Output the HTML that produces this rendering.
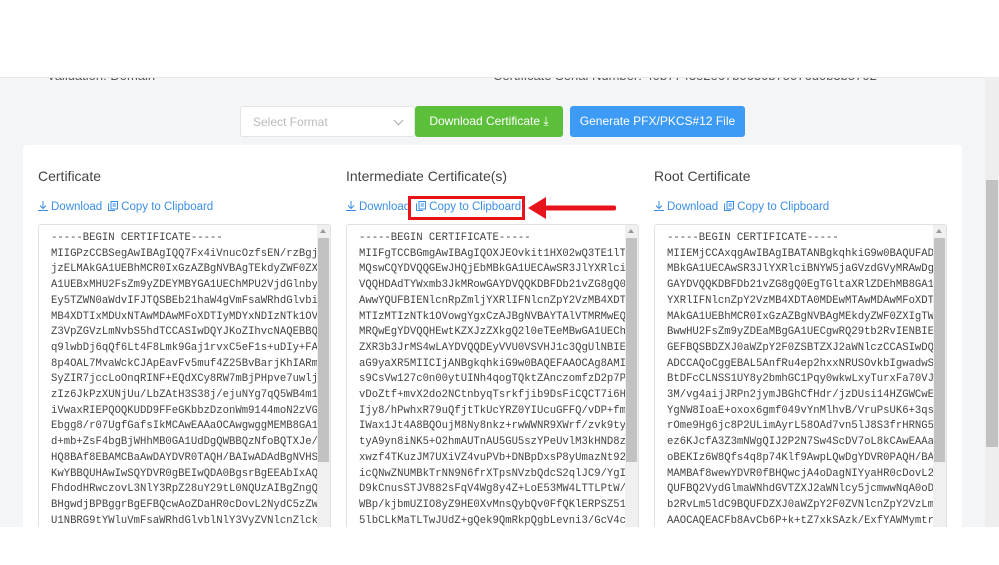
<!DOCTYPE html>
<html><head><meta charset="utf-8"><style>
*{box-sizing:border-box;margin:0;padding:0}
body{width:999px;height:562px;overflow:hidden;background:#fff;font-family:"Liberation Sans",Arial,sans-serif;position:relative}
.gray{position:absolute;left:0;top:77px;width:985px;height:450px;background:#f4f5f7;border-top:1px solid #e6e7ea;overflow:hidden}
.ghost{position:absolute;top:-10px;font-size:13px;color:#555}
.sel{position:absolute;left:240px;top:106px;width:175px;height:31px;background:#fff;border:1px solid #e2e4e8;border-radius:3px;font-size:12px;color:#bbb;padding:8px 12px}
.sel:after{content:"";position:absolute;right:12px;top:10px;width:6px;height:6px;border-right:1px solid #aaa;border-bottom:1px solid #aaa;transform:rotate(45deg)}
.btn{position:absolute;top:106px;height:31px;color:#fff;font-size:12px;text-align:center;line-height:31px;border-radius:3px}
.card{position:absolute;left:23px;top:145px;width:939px;height:420px;background:#fff;border-radius:4px}
.col{position:absolute;top:0}
.h{font-size:14px;color:#444;position:absolute;top:23px;white-space:nowrap}
.links{position:absolute;top:56px;font-size:11.5px;color:#3a8ee6;white-space:nowrap}
.ic{display:inline-block;width:10px;height:10px;vertical-align:-1px;margin-right:3px}
.ic2{margin-left:6px}
.ta{position:absolute;top:79px;width:293px;height:310px;border:1px solid #dfe1e5;border-radius:3px;overflow:hidden;background:#fff}
.ta pre{font-family:"Liberation Mono",monospace;font-size:10.6px;line-height:15.7px;color:#444;padding:6px 0 0 12px;white-space:pre}
.sb{position:absolute;right:0;top:0;width:13px;height:100%;background:#f0f0f0}
.sb i{position:absolute;left:1px;top:13px;width:11px;height:224px;background:#c2c2c2}
.sb:before{content:"";position:absolute;left:3px;top:4px;border:3px solid transparent;border-bottom:4px solid #999;border-top:0}
.psb{position:absolute;left:985px;top:77px;width:14px;height:450px;background:#eee}
.psb i{position:absolute;left:1px;top:103px;width:12px;height:267px;background:#c1c1c1}
</style></head><body>
<div class="gray">
<div class="ghost" style="left:47px">Validation: Domain</div>
<div class="ghost" style="left:493px">Certificate Serial Number: 40b7743e2e67b0630b75076d0b3b5702</div>
</div>
<div class="psb"><i></i></div>
<div class="sel">Select Format</div>
<div class="btn" style="left:415px;width:148px;background:#5cbf3a">Download Certificate ⤓</div>
<div class="btn" style="left:570px;width:175px;background:#3d9bf5">Generate PFX/PKCS#12 File</div>
<div class="card">
<div class="col" style="left:15px">
<div class="h">Certificate</div>
<div class="links"><svg class="ic" viewBox="0 0 10 10"><path d="M5 0V7M2 4.5L5 7.5L8 4.5M0 9.5H10" stroke="#3a8ee6" fill="none"/></svg>Download<svg class="ic ic2" viewBox="0 0 10 10"><path d="M3 .5H9.5V8H3ZM.5 2.5V9.5H7M4.5 3H8M4.5 5H8" stroke="#3a8ee6" fill="none"/></svg>Copy to Clipboard</div>
<div class="ta"><pre>-----BEGIN CERTIFICATE-----
MIIGPzCCBSegAwIBAgIQQ7Fx4iVnucOzfsEN/rzBgjAN
jzELMAkGA1UEBhMCR0IxGzAZBgNVBAgTEkdyZWF0ZXIg
A1UEBxMHU2FsZm9yZDEYMBYGA1UEChMPU2VjdGlnbyBM
Ey5TZWN0aWdvIFJTQSBEb21haW4gVmFsaWRhdGlvbiBT
MB4XDTIxMDUxNTAwMDAwMFoXDTIyMDYxNDIzNTk1OVow
Z3VpZGVzLmNvbS5hdTCCASIwDQYJKoZIhvcNAQEBBQAD
q9lwbDj6qQf6Lt4F8Lmk9Gaj1rvxC5eF1s+uDIy+FACH
8p4OAL7MvaWckCJApEavFv5muf4Z25BvBarjKhIARmeO
SyZIR7jccLoOnqRINF+EQdXCy8RW7mBjPHpve7uwljac
zIz6JkPzXUNjUu/LbZAtH3S38j/ejuNYg7qQ5WB4m1VW
iVwaxRIEPQOQKUDD9FFeGKbbzDzonWm9144moN2zVG2v
Ebgg8/r07UgfGafsIkMCAwEAAaOCAwgwggMEMB8GA1Ud
d+mb+ZsF4bgBjWHhMB0GA1UdDgQWBBQzNfoBQTXJe/1x
HQ8BAf8EBAMCBaAwDAYDVR0TAQH/BAIwADAdBgNVHSUE
KwYBBQUHAwIwSQYDVR0gBEIwQDA0BgsrBgEEAbIxAQIC
FhdodHRwczovL3NlY3RpZ28uY29tL0NQUzAIBgZngQwB
BHgwdjBPBggrBgEFBQcwAoZDaHR0cDovL2NydC5zZWN0
U1NBRG9tYWluVmFsaWRhdGlvblNlY3VyZVNlcnZlckNB</pre><div class="sb"><i></i></div></div>
</div>
<div class="col" style="left:323px">
<div class="h">Intermediate Certificate(s)</div>
<div class="links"><svg class="ic" viewBox="0 0 10 10"><path d="M5 0V7M2 4.5L5 7.5L8 4.5M0 9.5H10" stroke="#3a8ee6" fill="none"/></svg>Download<svg class="ic ic2" viewBox="0 0 10 10"><path d="M3 .5H9.5V8H3ZM.5 2.5V9.5H7M4.5 3H8M4.5 5H8" stroke="#3a8ee6" fill="none"/></svg>Copy to Clipboard</div>
<div class="ta"><pre>-----BEGIN CERTIFICATE-----
MIIFgTCCBGmgAwIBAgIQOXJEOvkit1HX02wQ3TE1lTAN
MQswCQYDVQQGEwJHQjEbMBkGA1UECAwSR3JlYXRlciBN
VQQHDAdTYWxmb3JkMRowGAYDVQQKDBFDb21vZG8gQ0Eg
AwwYQUFBIENlcnRpZmljYXRlIFNlcnZpY2VzMB4XDTE5
MTIzMTIzNTk1OVowgYgxCzAJBgNVBAYTAlVTMRMwEQYD
MRQwEgYDVQQHEwtKZXJzZXkgQ2l0eTEeMBwGA1UEChMV
ZXR3b3JrMS4wLAYDVQQDEyVVU0VSVHJ1c3QgUlNBIENl
aG9yaXR5MIICIjANBgkqhkiG9w0BAQEFAAOCAg8AMIIC
s9CsVw127c0n00ytUINh4qogTQktZAnczomfzD2p7PbP
vDoZtf+mvX2do2NCtnbyqTsrkfjib9DsFiCQCT7i6HTJ
Ijy8/hPwhxR79uQfjtTkUcYRZ0YIUcuGFFQ/vDP+fmyc
IWax1Jt4A8BQOujM8Ny8nkz+rwWWNR9XWrf/zvk9tyy5
tyA9yn8iNK5+O2hmAUTnAU5GU5szYPeUvlM3kHND8zLD
xwzf4TKuzJM7UXiVZ4vuPVb+DNBpDxsP8yUmazNt925H
icQNwZNUMBkTrNN9N6frXTpsNVzbQdcS2qlJC9/YgIoJ
D9kCnusSTJV882sFqV4Wg8y4Z+LoE53MW4LTTLPtW/e5
WBp/kjbmUZIO8yZ9HE0XvMnsQybQv0FfQKlERPSZ51eH
5lbCLkMaTLTwJUdZ+gQek9QmRkpQgbLevni3/GcV4clX</pre><div class="sb"><i></i></div></div>
</div>
<div class="col" style="left:631px">
<div class="h">Root Certificate</div>
<div class="links"><svg class="ic" viewBox="0 0 10 10"><path d="M5 0V7M2 4.5L5 7.5L8 4.5M0 9.5H10" stroke="#3a8ee6" fill="none"/></svg>Download<svg class="ic ic2" viewBox="0 0 10 10"><path d="M3 .5H9.5V8H3ZM.5 2.5V9.5H7M4.5 3H8M4.5 5H8" stroke="#3a8ee6" fill="none"/></svg>Copy to Clipboard</div>
<div class="ta"><pre>-----BEGIN CERTIFICATE-----
MIIEMjCCAxqgAwIBAgIBATANBgkqhkiG9w0BAQUFADB7
MBkGA1UECAwSR3JlYXRlciBNYW5jaGVzdGVyMRAwDgYD
GAYDVQQKDBFDb21vZG8gQ0EgTGltaXRlZDEhMB8GA1UE
YXRlIFNlcnZpY2VzMB4XDTA0MDEwMTAwMDAwMFoXDTI4
MAkGA1UEBhMCR0IxGzAZBgNVBAgMEkdyZWF0ZXIgTWFu
BwwHU2FsZm9yZDEaMBgGA1UECgwRQ29tb2RvIENBIExp
GEFBQSBDZXJ0aWZpY2F0ZSBTZXJ2aWNlczCCASIwDQYJ
ADCCAQoCggEBAL5AnfRu4ep2hxxNRUSOvkbIgwadwSr+
BtDFcCLNSS1UY8y2bmhGC1Pqy0wkwLxyTurxFa70VJoS
3M/vg4aijJRPn2jymJBGhCfHdr/jzDUsi14HZGWCwEiw
YgNW8IoaE+oxox6gmf049vYnMlhvB/VruPsUK6+3qszW
rOme9Hg6jc8P2ULimAyrL58OAd7vn5lJ8S3frHRNG5i1
ez6KJcfA3Z3mNWgQIJ2P2N7Sw4ScDV7oL8kCAwEAAaOB
oBEKIz6W8Qfs4q8p74Klf9AwpLQwDgYDVR0PAQH/BAQD
MAMBAf8wewYDVR0fBHQwcjA4oDagNIYyaHR0cDovL2Ny
QUFBQ2VydGlmaWNhdGVTZXJ2aWNlcy5jcmwwNqA0oDKG
b2RvLm5ldC9BQUFDZXJ0aWZpY2F0ZVNlcnZpY2VzLmNy
AAOCAQEACFb8AvCb6P+k+tZ7xkSAzk/ExfYAWMymtrwU</pre><div class="sb"><i></i></div></div>
</div>
</div>
<div style="position:absolute;left:0;top:527px;width:999px;height:35px;background:#fff"></div>
<div style="position:absolute;left:408px;top:196px;width:117px;height:24px;border:3px solid #e8141b"></div>
<svg style="position:absolute;left:524px;top:194px" width="92" height="28"><path d="M90 14H20" stroke="#e8141b" stroke-width="5" stroke-linecap="round"/><path d="M4 14L22 3V25Z" fill="#e8141b"/></svg>
</body></html>
